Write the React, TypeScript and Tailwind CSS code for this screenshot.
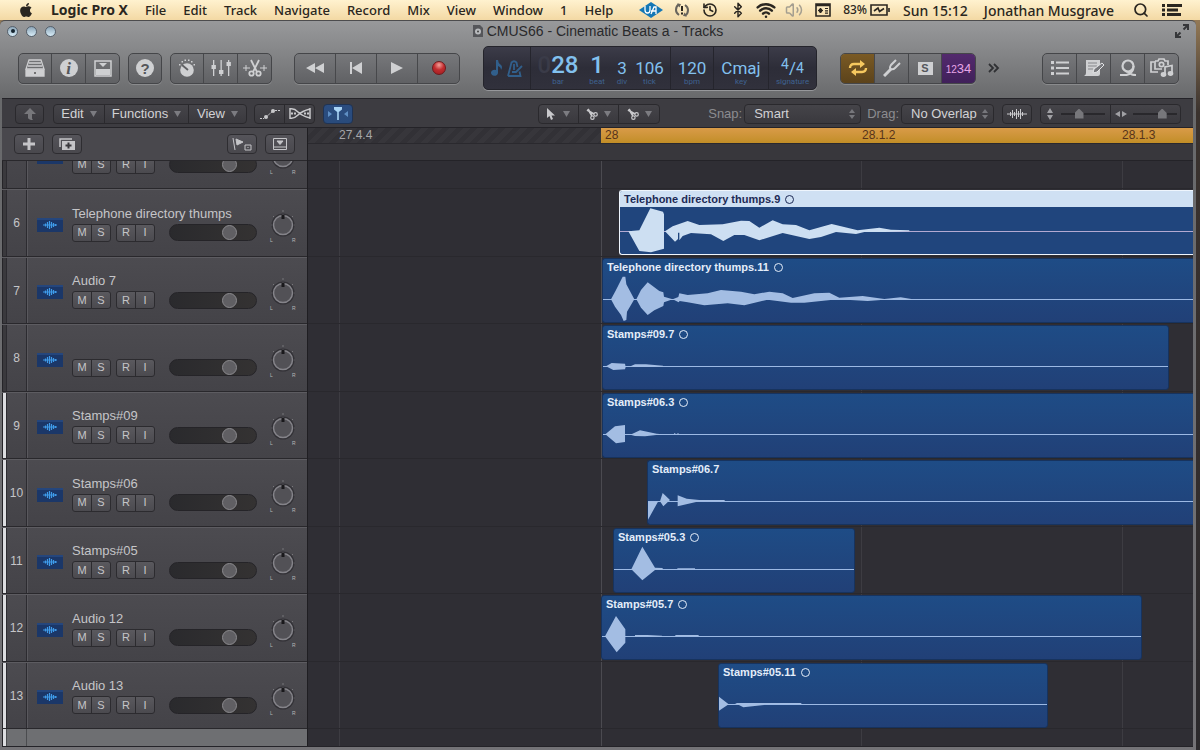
import React, { useState } from 'react';
import { Bluetooth, History, Search, Volume2, Wifi } from 'lucide-react';
import { FaApple } from 'react-icons/fa';

interface Region {
  name: string;
  start: number;
  length?: number;
  loop: boolean;
  selected?: boolean;
  wave: string;
}

interface Track {
  id: number;
  name: string;
  grouped: boolean;
  region: Region;
}

// Waveform paths use three units per pixel, with the zero line at y = 75
const TRACKS: Track[] = [
  {
    id: 6, name: 'Telephone directory thumps', grouped: false,
    region: {
      name: 'Telephone directory thumps.9', start: 311, loop: true, selected: true,
      wave: 'M25 75 L58 72 L91 6 L129 16 L132 24 V127 L93 138 L58 134Z M135 75 L158 60 L203 44 L238 56 L308 54 L363 43 L388 44 L418 64 L458 42 L488 54 L528 56 L568 72 L635 53 L713 72 L778 64 L813 70 L868 72 V75 L793 77 L733 77 L708 83 L648 77 L603 92 L568 98 L488 80 L418 102 L373 86 L343 86 L310 104 L273 84 L213 80 L188 89 L178 102 V79 L174 79 V98 L165 106Z',
    },
  },
  {
    id: 7, name: 'Audio 7', grouped: false,
    region: {
      name: 'Telephone directory thumps.11', start: 294, loop: true,
      wave: 'M24 75 L39 47 L59 7 H67 L70 30 L94 75 L72 112 L70 137 L62 140 L54 122 L36 97Z M100 75 L114 47 L134 24 L169 50 L181 54 L183 67 L209 75 L183 84 L181 95 L154 108 L134 122 L114 100Z M209 75 L226 68 L229 57 L254 62 L314 57 L354 47 L414 52 L454 60 L499 52 L539 57 L569 71 L634 57 L679 55 L709 70 L779 65 L844 74 L893 69 L925 74 V77 L844 76 L794 80 L704 75 L604 85 L564 85 L494 76 L424 93 L374 87 L304 93 L254 84 L230 80 L227 84Z',
    },
  },
  {
    id: 8, name: '', grouped: false,
    region: {
      name: 'Stamps#09.7', start: 294, length: 567, loop: true,
      wave: 'M9 75 L26 65 L66 67 L68 77 L66 84 L31 86Z M84 74 L96 69 H129 L180 73 V77 H84Z',
    },
  },
  {
    id: 9, name: 'Stamps#09', grouped: true,
    region: {
      name: 'Stamps#06.3', start: 294, loop: true,
      wave: 'M7 75 L36 51 L66 47 V98 L39 102Z M82 76 L111 63 L161 73 L180 75 L126 81 L96 80Z M213 72 H217 V75 H213Z M223 72 H227 V75 H223Z',
    },
  },
  {
    id: 10, name: 'Stamps#06', grouped: true,
    region: {
      name: 'Stamps#06.7', start: 339, loop: false,
      wave: 'M0 76 H30 L0 130Z M36 75 L44 50 L66 71 L46 90Z M89 57 L116 67 L154 71 H230 V75 H154 L89 90Z',
    },
  },
  {
    id: 11, name: 'Stamps#05', grouped: true,
    region: {
      name: 'Stamps#05.3', start: 305, length: 242, loop: true,
      wave: 'M52 75 L85 7 L123 70 L146 71 V77 L123 77 L85 108Z M190 72 H243 V75 H190Z',
    },
  },
  {
    id: 12, name: 'Audio 12', grouped: true,
    region: {
      name: 'Stamps#05.7', start: 293, length: 541, loop: true,
      wave: 'M9 75 L42 14 L70 54 V94 L44 123Z M99 71 H136 L180 73 V76 H99Z M220 71 H290 V74 H220Z',
    },
  },
  {
    id: 13, name: 'Audio 13', grouped: true,
    region: {
      name: 'Stamps#05.11', start: 410, length: 330, loop: true,
      wave: 'M0 52 L29 75 L0 94Z M48 71 H135 V77 L73 84Z M135 71 H247 V74 H135Z',
    },
  },
];

const MENUS = ['File', 'Edit', 'Track', 'Navigate', 'Record', 'Mix', 'View', 'Window', '1', 'Help'];

const toolButton =
  'flex h-full items-center justify-center border-r border-[#47484b] last:border-r-0 text-[#cfd0d2]';
const toolGroup =
  'flex h-[31px] shrink-0 overflow-hidden rounded-[5px] border border-[#454649] bg-gradient-to-b from-[#77787b] to-[#606164] shadow-[0_1px_0_#8a8b8d]';
const barGroup =
  'flex h-[20px] shrink-0 overflow-hidden rounded-[4px] border border-[#2a292d] bg-gradient-to-b from-[#454449] to-[#3a393e] text-[#c9c9cc]';

const MenuBar: React.FC = () => (
  <header className="flex h-[20px] shrink-0 items-center bg-gradient-to-b from-[#fff2cf] to-[#f3d9a4] pr-[18px] pl-[18px] font-['Noto_Sans','Open_Sans',sans-serif] text-[14px] font-medium text-[#2a2620]">
    <button aria-label="Apple" className="mr-[17px]"><FaApple className="h-4 w-4" /></button>
    <nav className="flex items-baseline gap-[17px] whitespace-nowrap text-[13px]">
      <button className="text-[14px] font-bold">Logic Pro X</button>
      {MENUS.map(menu => <button key={menu}>{menu}</button>)}
    </nav>
    <div className="ml-auto flex items-center whitespace-nowrap">
      <svg className="mr-[11px] h-4 w-6" viewBox="0 0 24 16">
        <path d="M0 8 9 2 12 0 15 2 24 8 15 14 12 16 9 14Z" fill="#1477b5" />
        <path d="M6 4v4q0 3 2.500 3T11 8V4M12 12l3-7h2v7M12 9h5" fill="none" stroke="#fff" strokeWidth="1.300" />
      </svg>
      <svg viewBox="0 0 16 16" className="mr-[12px] h-4 w-4 text-[#68645c]" fill="none" stroke="currentColor" strokeWidth="2">
        <path d="M5 2.500Q2 4 2 8q0 3 3 5M11 3q3 2 3 5 0 4-3 5.500" />
        <path d="M3 1.500 7 2 5.500 5.500zM13 14.500 9 14l1.500-3.500z" fill="currentColor" stroke="none" />
        <path d="M8 4v5M8 10.500v2" stroke="#2a2620" />
      </svg>
      <History className="mr-[12px] h-4 w-4" strokeWidth={2.4} />
      <Bluetooth className="mr-[10px] h-4 w-4" strokeWidth={2.2} />
      <Wifi className="mr-[9px] h-5 w-5" strokeWidth={3} />
      <Volume2 className="mr-[12px] h-[18px] w-[18px] text-[#a59f90]" />
      <svg className="mr-[12px] h-4 w-4" viewBox="0 0 16 16" fill="none" stroke="currentColor" strokeWidth="1.600">
        <path d="M1 2h14v12H1zM1 3.500h14" />
        <path d="M3 8.500h5M5.500 6v5M4 7l3 3M7 7l-3 3M10 6.500h3M10 8.800h3M10 11.200h3" strokeWidth="1.200" />
      </svg>
      <span className="mr-[3px] text-[12px]">83%</span>
      <svg className="mr-[12px] h-3 w-[21px]" viewBox="0 0 21 12" fill="none" stroke="currentColor" strokeWidth="1.600">
        <path d="M1 1h16v10H1zM19 4v4" />
        <path d="m4 7 4-3 1.500 3.500L14 4.500" />
      </svg>
      <span className="mr-[16px]">Sun 15:12</span>
      <span className="mr-[19px]">Jonathan Musgrave</span>
      <button aria-label="Search" className="mr-[13px]"><Search className="h-4 w-4" strokeWidth={2.6} /></button>
      <button aria-label="Notifications">
        <svg className="h-3 w-5" viewBox="0 0 20 12" fill="currentColor">
          <path d="M0 0h3v3H0zM5 0h15v3H5zM0 4.500h3v3H0zM5 4.500h11v3H5zM0 9h3v3H0zM5 9h14v3H5z" />
        </svg>
      </button>
    </div>
  </header>
);

const TitleBar: React.FC = () => (
  <div className="flex h-5 items-center px-[7px] text-[14px] text-[#29292b]">
    <div className="flex w-24 gap-2">
      {['Close', 'Minimise', 'Zoom'].map(name => (
        <button
          key={name}
          aria-label={name}
          className="flex h-[11px] w-[11px] items-center justify-center rounded-full border border-[#55606c] bg-gradient-to-b from-[#8da6b8] to-[#d8edf8]"
        >
          {name === 'Close' && <span className="h-1 w-1 rounded-full bg-[#15242f]" />}
        </button>
      ))}
    </div>
    <h1 className="flex flex-1 items-center justify-center gap-1">
      <svg className="h-3 w-[10px]" viewBox="0 0 10 12">
        <path d="M0 0h7l3 3v9H0z" fill="#55565a" />
        <circle cx="5" cy="6.500" r="3" fill="#b8babd" />
        <circle cx="5" cy="6.500" r="1" fill="#444" />
      </svg>
      CMUS66 - Cinematic Beats a - Tracks
    </h1>
    <div className="flex w-24 justify-end">
      <button aria-label="Full screen">
        <svg className="h-[14px] w-[14px]" viewBox="0 0 14 14" fill="none" stroke="#36373a" strokeWidth="2">
          <path d="M8 1h5v5M13 1 8.500 5.500M1 8v5h5M1 13l4.500-4.500" />
        </svg>
      </button>
    </div>
  </div>
);

const LcdCell: React.FC<{ label: string; large?: boolean; className: string; children: React.ReactNode }> = ({
  label, large, className, children,
}) => (
  <div className={`flex shrink-0 flex-col items-center ${className}`}>
    <div className={`flex h-[30px] items-end text-[#82c1ee] ${large ? 'text-[24px] leading-[24px] font-medium' : 'text-[17px] leading-[18px]'}`}>
      {children}
    </div>
    <div className="text-[8px] leading-[9px] text-[#3f6290]">{label}</div>
  </div>
);

const Lcd: React.FC = () => (
  <div className="flex h-[44px] shrink-0 overflow-hidden rounded-[5px] border border-[#24242b] bg-gradient-to-b from-[#3c3c49] via-[#2d2d38] to-[#31313c] font-['Roboto',sans-serif] shadow-[0_1px_0_#96979a]">
    <div className="flex w-[47px] items-center justify-center gap-1 border-r border-[#25252d] text-[#315f8b]">
      <svg className="h-5 w-3" viewBox="0 0 12 20" fill="currentColor">
        <path d="M5 2h2q0 3 3 5 2 2 0 5 0-3-3-4v7a3.500 3 0 1 1-2-3z" />
      </svg>
      <svg className="h-[17px] w-4" viewBox="0 0 16 17" fill="none" stroke="currentColor" strokeWidth="1.800">
        <path d="M1 16 4.500 2.500Q7 0 9.500 2.500L10.500 7M1 16h12.500l-1-4.500M5 12l4 0 6-6M7 4v6" />
      </svg>
    </div>
    <div className="flex w-[140px] border-r border-[#25252d] pl-[6px]">
      <LcdCell label="bar" large className="w-[42px]"><span className="text-[#3a3b48]">0</span>28</LcdCell>
      <LcdCell label="beat" large className="w-[36px]">1</LcdCell>
      <LcdCell label="div" className="w-[14px]">3</LcdCell>
      <LcdCell label="tick" className="w-[41px]">106</LcdCell>
    </div>
    <LcdCell label="bpm" className="w-[43px] border-r border-[#25252d]">120</LcdCell>
    <LcdCell label="key" className="w-[55px] border-r border-[#25252d]">Cmaj</LcdCell>
    <LcdCell label="signature" className="w-[47px]">
      <span className="text-[14px] leading-[26px]">4</span>/<span className="text-[14px] leading-[18px]">4</span>
    </LcdCell>
  </div>
);

const Toolbar: React.FC = () => (
  <div className="flex h-[54px] items-center pr-[17px] pl-[18px]">
    <div className={toolGroup}>
      <button aria-label="Library" className={`${toolButton} w-[33px]`}>
        <svg className="h-[18px] w-5" viewBox="0 0 20 18" fill="none" stroke="currentColor" strokeWidth="1.300">
          <path d="M4 1h12l3 9H1zM4 4h12M3 7h14" />
          <path d="M1 11h18v6H1z" fill="currentColor" />
          <circle cx="10" cy="14" r="1" fill="#555" stroke="none" />
        </svg>
      </button>
      <button aria-label="Inspector" className={`${toolButton} w-[34px]`}>
        <span className="flex h-[18px] w-[18px] items-center justify-center rounded-full bg-[#cfd0d2] font-['Liberation_Serif',serif] text-[17px] leading-none font-bold text-[#55565a] italic">i</span>
      </button>
      <button aria-label="Toolbar" className={`${toolButton} w-[33px]`}>
        <svg className="h-[17px] w-[18px]" viewBox="0 0 18 17">
          <path d="M1 1h16v15H1z" fill="none" stroke="currentColor" strokeWidth="1.500" />
          <path d="M5 3h8L9 7z" fill="currentColor" />
          <path d="M2 9h14v6H2z" fill="currentColor" />
        </svg>
      </button>
    </div>
    <div className={`${toolGroup} ml-[8px]`}>
      <button aria-label="Quick help" className={`${toolButton} w-[32px]`}>
        <span className="flex h-[18px] w-[18px] items-center justify-center rounded-full bg-[#cfd0d2] text-[15px] leading-none font-bold text-[#55565a]">?</span>
      </button>
    </div>
    <div className={`${toolGroup} ml-[8px]`}>
      <button aria-label="Smart controls" className={`${toolButton} w-[33px]`}>
        <svg className="h-[18px] w-[18px]" viewBox="0 0 18 18" fill="currentColor">
          <circle cx="9" cy="11" r="6.800" />
          <path d="m4 6 6 5" stroke="#606164" strokeWidth="1.800" />
          <path d="M1 5h1.500v1.500H1zM3.500 2H5v1.500H3.500zM6.500.5H8V2H6.500zM10 .5h1.500V2H10zM13 2h1.500v1.500H13zM15.500 5H17v1.500h-1.500z" />
        </svg>
      </button>
      <button aria-label="Mixer" className={`${toolButton} w-[34px]`}>
        <svg className="h-[18px] w-5" viewBox="0 0 20 18" fill="currentColor">
          <path d="M2 1h1.300v16H2zM9.500 1h1.300v16H9.500zM17 1h1.300v16H17zM.5 6h4.400v4H.5zM8 11h4.400v4H8zM15.500 3h4.400v4h-4.400z" />
        </svg>
      </button>
      <button aria-label="Editors" className={`${toolButton} w-[33px]`}>
        <svg className="h-[18px] w-6" viewBox="0 0 24 18" fill="none" stroke="currentColor" strokeWidth="1.800">
          <path d="m8 1 6 12M16 1 10 13" />
          <circle cx="8.500" cy="14.500" r="2.200" />
          <circle cx="15.500" cy="14.500" r="2.200" />
          <path d="M0 9h7M17 9h7M3 6v6M21 6v6" strokeWidth="1" />
        </svg>
      </button>
    </div>
    <div className={`${toolGroup} ml-[22px]`}>
      <button aria-label="Rewind" className={`${toolButton} w-[41px]`}>
        <svg className="h-3 w-5" viewBox="0 0 20 12" fill="currentColor"><path d="M10 1v10L1 6zM19 1v10l-9-5z" /></svg>
      </button>
      <button aria-label="Go to beginning" className={`${toolButton} w-[41px]`}>
        <svg className="h-3 w-[13px]" viewBox="0 0 13 12" fill="currentColor"><path d="M0 0h2v12H0zM12 0v12L2 6z" /></svg>
      </button>
      <button aria-label="Play" className={`${toolButton} w-[41px]`}>
        <svg className="h-[14px] w-[14px]" viewBox="0 0 14 14" fill="currentColor"><path d="M1 1v12l12-6z" /></svg>
      </button>
      <button aria-label="Record" className={`${toolButton} w-[41px]`}>
        <span className="h-[14px] w-[14px] rounded-full border border-[#6e1a1d] bg-[radial-gradient(circle_at_50%_25%,#f3a09a,#c22d2f_45%,#9c1c20)]" />
      </button>
    </div>
    <div className="ml-[23px] flex"><Lcd /></div>
    <div className={`${toolGroup} ml-[23px]`}>
      <button aria-label="Cycle" className={`${toolButton} w-[34px] bg-gradient-to-b from-[#7a5a24] to-[#5c431b] text-[#f6c85f]`}>
        <svg className="h-4 w-5" viewBox="0 0 20 16" fill="none" stroke="currentColor" strokeWidth="2.400">
          <path d="M2 8Q2 4 6 4h7M18 8q0 4-4 4H7" />
          <path d="M12 0v8l5-4zM8 8v8l-5-4z" fill="currentColor" stroke="none" />
        </svg>
      </button>
      <button aria-label="Tuner" className={`${toolButton} w-[34px]`}>
        <svg className="h-[18px] w-[18px]" viewBox="0 0 18 18" fill="none" stroke="currentColor" strokeWidth="2">
          <path d="M1 17 8 10" strokeWidth="3" />
          <path d="M13 1 8 6Q6 9 8 10t4-1l5-5" />
        </svg>
      </button>
      <button aria-label="Solo" className={`${toolButton} w-[33px]`}>
        <span className="flex h-[13px] w-[15px] items-center justify-center bg-[#cfd0d2] text-[11px] font-bold text-[#55565a]">S</span>
      </button>
      <button aria-label="Count in" className={`${toolButton} w-[33px] bg-gradient-to-b from-[#532a6d] to-[#40205a] text-[#e6a5e6]`}>
        <span className="text-[13px] leading-none"><span className="text-[10px]">12</span>34</span>
      </button>
    </div>
    <button aria-label="More" className="ml-[12px]">
      <svg className="h-[10px] w-3" viewBox="0 0 12 10" fill="none" stroke="#303134" strokeWidth="1.800"><path d="m1 1 4 4-4 4M6 1l4 4-4 4" /></svg>
    </button>
    <div className={`${toolGroup} ml-auto`}>
      <button aria-label="List editors" className={`${toolButton} w-[34px]`}>
        <svg className="h-4 w-5" viewBox="0 0 20 16" fill="currentColor">
          <path d="M1 1h3v3H1zM6 1.500h13v2H6zM1 6.500h3v3H1zM6 7h13v2H6zM1 12h3v3H1zM6 12.500h13v2H6z" />
        </svg>
      </button>
      <button aria-label="Note pads" className={`${toolButton} w-[34px]`}>
        <svg className="h-[18px] w-[22px]" viewBox="0 0 22 18">
          <path d="M3 1h14v14q0 2-2 2H1q2-1 2-3z" fill="currentColor" />
          <path d="M5 4h9M5 7h9M5 10h5" stroke="#85868a" />
          <path d="m10 14 1-4 8-6 2 2-7 7z" fill="#77787c" stroke="#e2e3e5" />
        </svg>
      </button>
      <button aria-label="Apple loops" className={`${toolButton} w-[34px]`}>
        <svg className="h-[18px] w-[18px]" viewBox="0 0 18 18" fill="none" stroke="currentColor" strokeWidth="2.200">
          <circle cx="9" cy="7" r="5.500" />
          <path d="M14.500 7q0 7-7 9H1M7 12.500q3 0 5 2.500 1 1 5 1" />
        </svg>
      </button>
      <button aria-label="Browsers" className={`${toolButton} w-[33px]`}>
        <svg className="h-5 w-6" viewBox="0 0 24 20" fill="none" stroke="currentColor" strokeWidth="1.700">
          <path d="M4 4H1v10h7M5 3h3l1-2h5l1 2h3v4M5 3v8h7" />
          <circle cx="11.500" cy="6.500" r="2.200" />
          <path d="M15 16V9l7-1.500V15" />
          <ellipse cx="13.500" cy="16.500" rx="2" ry="1.600" fill="currentColor" />
          <ellipse cx="20.500" cy="15.500" rx="2" ry="1.600" fill="currentColor" />
        </svg>
      </button>
    </div>
  </div>
);

const Caret: React.FC = () => (
  <svg className="h-[6px] w-[7px]" viewBox="0 0 7 6" fill="#7c7c81"><path d="M0 0h7L3.500 6z" /></svg>
);

const BarSelect: React.FC<{ id: string; label: string; options: string[]; className: string }> = ({
  id, label, options, className,
}) => (
  <>
    <label htmlFor={id} className="mr-[2px] text-[#8c8c90]">{label}</label>
    <div className={`${barGroup} relative ${className}`}>
      <select id={id} className="h-full w-full appearance-none bg-transparent pl-[9px] leading-none text-[#d2d2d5] outline-none">
        {options.map(option => <option key={option}>{option}</option>)}
      </select>
      <svg className="pointer-events-none absolute top-[4px] right-[5px] h-[10px] w-[6px]" viewBox="0 0 6 10" fill="#77777c">
        <path d="M0 4h6L3 0zM0 6h6l-3 4z" />
      </svg>
    </div>
  </>
);

const ScissorTool: React.FC = () => (
  <svg className="h-3 w-3" viewBox="0 0 12 12" fill="none" stroke="currentColor" strokeWidth="1.200">
    <path d="m1 2 7 4M2 1l4 7" strokeWidth="1.800" />
    <circle cx="9.600" cy="6.400" r="1.700" />
    <circle cx="6.400" cy="9.700" r="1.700" />
  </svg>
);

const zoomSlider =
  "h-[13px] w-[44px] appearance-none bg-[linear-gradient(#29282c,#29282c)] bg-[length:100%_2px] bg-center bg-no-repeat [&::-webkit-slider-thumb]:h-[10px] [&::-webkit-slider-thumb]:w-[9px] [&::-webkit-slider-thumb]:appearance-none [&::-webkit-slider-thumb]:bg-[#77777b] [&::-webkit-slider-thumb]:[clip-path:polygon(50%_0,100%_45%,100%_100%,0_100%,0_45%)]";

const ControlBar: React.FC = () => (
  <div className="flex h-[29px] items-center border-b border-[#242328] bg-[#3d3c41] pt-px pr-[12px] pl-[13px] text-[13px]">
    <div className={`${barGroup} w-[29px]`}>
      <button aria-label="Up" className="flex flex-1 items-center justify-center">
        <svg className="h-3 w-3" viewBox="0 0 12 12" fill="#77777b"><path d="M6 0 0 6h4v4q1 2 5 2-1-1-1-2V6h4z" /></svg>
      </button>
    </div>
    <div className={`${barGroup} ml-[9px]`}>
      {[
        { name: 'Edit', width: 'w-[51px]' },
        { name: 'Functions', width: 'w-[84px]' },
        { name: 'View', width: 'w-[57px]' },
      ].map(menu => (
        <button key={menu.name} className={`flex items-center justify-center gap-[6px] border-r border-[#2a292d] text-[#d2d2d5] last:border-r-0 ${menu.width}`}>
          {menu.name}<Caret />
        </button>
      ))}
    </div>
    <div className={`${barGroup} ml-[7px]`}>
      <button aria-label="Automation" className="flex w-[30px] items-center justify-center border-r border-[#2a292d]">
        <svg className="h-3 w-5" viewBox="0 0 20 12" fill="currentColor">
          <circle cx="6" cy="9" r="2" /><circle cx="13" cy="3" r="2" />
          <path d="m6 9 7-6M0 10.500h4M15 2.500h5" stroke="currentColor" strokeDasharray="2 1" />
        </svg>
      </button>
      <button aria-label="Flex" className="flex w-[29px] items-center justify-center">
        <svg className="h-[13px] w-[22px]" viewBox="0 0 22 13" fill="none" stroke="currentColor" strokeWidth="1.500">
          <path d="M1 1v11M21 1v11M1 2Q5 1 9 5t12 6M1 11q4 1 8-3t12-6" />
          <path d="M2 6.500h5M15 6.500h5" strokeWidth="2" strokeDasharray="2 1" />
        </svg>
      </button>
    </div>
    <button aria-label="Catch playhead" className="ml-[8px] flex h-[20px] w-[30px] shrink-0 items-center justify-center rounded-[4px] border border-[#1f3354] bg-gradient-to-b from-[#2b4d80] to-[#294b7c]">
      <svg className="h-[13px] w-5" viewBox="0 0 20 13">
        <path d="M0 4v6l4-3zM20 4v6l-4-3z" fill="#5f8fc4" />
        <path d="M6 0h8v2.500L10.800 5v8H9.200V5L6 2.500z" fill="#a9d4f5" />
      </svg>
    </button>
    <div className={`${barGroup} ml-auto`}>
      <button aria-label="Pointer tool" className="flex w-[40px] items-center justify-center gap-[8px] border-r border-[#2a292d]">
        <svg className="h-3 w-2" viewBox="0 0 8 12" fill="currentColor"><path d="M0 0v10l2.500-2L4 12l2-1-1.500-3.500H8z" /></svg>
        <Caret />
      </button>
      <button aria-label="Left click tool" className="flex w-[40px] items-center justify-center gap-[6px] border-r border-[#2a292d]"><ScissorTool /><Caret /></button>
      <button aria-label="Right click tool" className="flex w-[40px] items-center justify-center gap-[6px]"><ScissorTool /><Caret /></button>
    </div>
    <div className="ml-[48px] flex shrink-0 items-center">
      <BarSelect id="snap" label="Snap:" options={['Smart', 'Bar', 'Beat', 'Division']} className="mr-[6px] w-[117px]" />
      <BarSelect id="drag" label="Drag:" options={['No Overlap', 'Overlap', 'X-Fade']} className="w-[93px]" />
      <div className={`${barGroup} ml-[8px] w-[30px]`}>
        <button aria-label="Waveform zoom" className="flex flex-1 items-center justify-center">
          <svg className="h-3 w-5" viewBox="0 0 20 12" stroke="currentColor">
            <path d="M0 6h20M3.500 4v4M5.500 2v8M7.500 4v4M9.500 1v10M11.500 3v6M13.500 1v10M15.500 4v4" />
          </svg>
        </button>
      </div>
      <div className={`${barGroup} ml-[8px] items-center`}>
        <div className="flex h-full w-[70px] items-center justify-center gap-[8px] border-r border-[#2a292d]">
          <svg className="h-3 w-[6px]" viewBox="0 0 6 12" fill="#a0a0a4"><path d="M0 5h6L3 0zM0 7h6l-3 5z" /></svg>
          <input type="range" aria-label="Vertical zoom" defaultValue={40} className={zoomSlider} />
        </div>
        <div className="flex h-full w-[69px] items-center justify-center gap-[6px]">
          <svg className="h-2 w-3" viewBox="0 0 12 8" fill="#a0a0a4"><path d="M5 1v6L0 4zM7 1v6l5-3z" /></svg>
          <input type="range" aria-label="Horizontal zoom" defaultValue={72} className={zoomSlider} />
        </div>
      </div>
    </div>
  </div>
);

const smallButton =
  'flex h-[16px] w-[19px] items-center justify-center border-r border-[#2c2b2f] last:w-[18px] last:border-r-0';

const TrackHeader: React.FC<{ id: number; name: string; grouped: boolean }> = ({ id, name, grouped }) => {
  const [volume, setVolume] = useState(73);
  const label = name || `Track ${id}`;

  return (
    <div className="flex h-full w-full shrink-0 border-t border-[#5d5c61] bg-gradient-to-b from-[#4c4b50] to-[#444348] text-[#c5c5c8]">
      <div className={`w-[4px] border-l border-[#252428] ${grouped ? 'bg-[#dcdde0]' : 'bg-[#3a393d]'}`} />
      <div className="flex w-[21px] items-center justify-center border-r border-l border-[#2c2b30] text-[12px]">{id}</div>
      <div className="flex flex-1 items-center border-l border-[#59585d] pr-[10px] pl-[9px]">
        <svg className="mt-[3px] h-[14px] w-[26px] shrink-0" viewBox="0 0 26 14">
          <path d="M0 0h26v14H0z" fill="#1b3768" />
          <path d="M0 0h26v2H0z" fill="#25467c" />
          <path d="M6 7h14M8.500 5.500v3M10.500 4v6M12.500 3v8M14.500 4v6M16.500 5v4M18.500 6v2" stroke="#3f9bea" strokeWidth="1.200" />
        </svg>
        <div className="ml-[9px] min-w-0 flex-1">
          <div className="h-[18px] text-[13px] leading-[18px] whitespace-nowrap">{name}</div>
          <div className="mt-px flex items-center">
            {['MS', 'RI'].map(pair => (
              <div key={pair} className="mr-[5px] flex overflow-hidden rounded-[3px] border border-[#2c2b2f] bg-gradient-to-b from-[#5a595e] to-[#4b4a4f] text-[11px] leading-none">
                {pair.split('').map(key => <button key={key} className={smallButton}>{key}</button>)}
              </div>
            ))}
            <input
              type="range"
              aria-label={`${label} volume`}
              value={volume}
              onChange={e => setVolume(Number(e.target.value))}
              className="ml-[9px] h-[17px] w-[88px] appearance-none rounded-full border border-[#252428] bg-gradient-to-r from-[#2a2a2d] to-[#343232] [&::-webkit-slider-thumb]:h-[15px] [&::-webkit-slider-thumb]:w-[15px] [&::-webkit-slider-thumb]:appearance-none [&::-webkit-slider-thumb]:rounded-full [&::-webkit-slider-thumb]:border [&::-webkit-slider-thumb]:border-[#8b8a8e] [&::-webkit-slider-thumb]:bg-[#605f63]"
            />
          </div>
        </div>
        <svg className="h-[42px] w-[28px] shrink-0" viewBox="0 0 28 42" role="img" aria-label={`${label} pan`}>
          <path d="M14 8v2M4 14l1 1M24 14l-1 1M2 23h1M25 23h1" stroke="#77767a" />
          <circle cx="14" cy="23" r="11.500" fill="#323136" />
          <circle cx="14" cy="23" r="9.500" fill="#525156" stroke="#85848a" strokeWidth="1.500" />
          <path d="M12.500 13h3v4h-3z" fill="#19181b" />
          <text x="1" y="40" fontSize="5" fill="#b5b5b8">L</text>
          <text x="23" y="40" fontSize="5" fill="#b5b5b8">R</text>
        </svg>
      </div>
    </div>
  );
};

const RegionBlock: React.FC<{ region: Region }> = ({ region }) => {
  const { selected } = region;
  return (
    <div
      className={`relative flex h-[65px] flex-col overflow-hidden rounded-[3px] border ${region.length ? 'shrink-0' : 'flex-1 rounded-r-none border-r-0'} ${selected ? 'border-[#eef5fd] bg-[#20457d]' : 'border-[#17335e] bg-gradient-to-b from-[#1e4c86] to-[#214077]'}`}
      style={{ marginLeft: region.start, width: region.length }}
    >
      <div className={`flex h-[16px] shrink-0 items-center gap-[5px] pl-[4px] text-[11px] font-bold whitespace-nowrap ${selected ? 'bg-[#cfe0f3] text-[#1d2a55]' : 'text-[#e4edf9]'}`}>
        {region.name}
        {region.loop && <span className="h-[9px] w-[9px] rounded-full border border-current" />}
      </div>
      <div className={`relative flex-1 pt-[24px] ${selected ? 'text-[#cddff2]' : 'text-[#a3bde3]'}`}>
        <div className={`h-px w-full ${selected ? 'bg-[#b3a9d2]' : 'bg-[#9cb9e4]'}`} />
        <svg className="absolute top-0 left-0 h-[49px] w-[320px]" viewBox="0 2 960 147">
          <path d={region.wave} fill="currentColor" />
        </svg>
      </div>
    </div>
  );
};

const Ruler: React.FC = () => (
  <div className="flex h-[33px] shrink-0 flex-col border-b border-[#242328] bg-[#38373c] text-[12px] leading-[14px]">
    <div className="flex h-[16px] border-b border-[#2a292e]">
      <div className="w-[293px] shrink-0 bg-[repeating-linear-gradient(135deg,#37363b_0_5px,#323136_5px_10px)] pl-[31px] text-[#a6a6aa]">27.4.4</div>
      <div className="flex flex-1 overflow-hidden bg-gradient-to-b from-[#d99b48] to-[#c28e26] pl-[4px] text-[#57331a]">
        {['28', '28.1.2', '28.1.3'].map(mark => <span key={mark} className="w-[260px] shrink-0 first:w-[257px] last:w-auto">{mark}</span>)}
      </div>
    </div>
  </div>
);

const GridLines: React.FC = () => (
  <div className="pointer-events-none absolute inset-0 flex overflow-hidden">
    <div className="w-[32px] shrink-0 border-r border-[#3d3c42]" />
    <div className="w-[262px] shrink-0 border-r border-[#4b4a50]" />
    <div className="w-[260px] shrink-0 border-r border-[#3d3c42]" />
    <div className="w-[261px] shrink-0 border-r border-[#3d3c42]" />
  </div>
);

const headerButton =
  'flex h-[20px] w-[30px] items-center justify-center rounded-[4px] border border-[#2e2d31] bg-gradient-to-b from-[#55545a] to-[#49484d] text-[#c5c5c8]';

const App: React.FC = () => (
  <div className="flex min-h-screen flex-col bg-gradient-to-b from-[#a98a5e] via-[#3a322e] via-15% to-[#2b292c] font-['Liberation_Sans',Arial,sans-serif]">
    <MenuBar />
    <main className="mr-[4px] flex flex-1 flex-col rounded-t-[5px] border-t border-[#4c4c4e] bg-[linear-gradient(#98999b,#68696b_78px,#747377)]">
      <TitleBar />
      <Toolbar />
      <div className="mt-[3px] mr-[3px] mb-[3px] ml-[2px] flex flex-1 flex-col border-t border-b border-[#242328] bg-[#2f2e34]">
        <ControlBar />
        <div className="flex flex-1">
          <section className="flex w-[306px] shrink-0 flex-col border-r border-[#1f1e22] bg-[#6e6f72]">
            <div className="flex h-[33px] items-center border-b border-[#29282c] bg-[#49484d] px-[12px]">
              <button aria-label="Add track" className={headerButton}>
                <svg className="h-3 w-3" viewBox="0 0 12 12" fill="currentColor"><path d="M4.500 0h3v4.500H12v3H7.500V12h-3V7.500H0v-3h4.500z" /></svg>
              </button>
              <button aria-label="Duplicate track" className={`${headerButton} ml-[8px]`}>
                <svg className="h-3 w-4" viewBox="0 0 16 12">
                  <path d="M1 9V1h12" fill="none" stroke="currentColor" strokeWidth="1.500" />
                  <path d="M3 3h13v9H3z" fill="currentColor" />
                  <path d="M9.500 4.500v6M6.500 7.500h6" stroke="#3a393d" strokeWidth="2" />
                </svg>
              </button>
              <button aria-label="Global tracks" className={`${headerButton} ml-auto`}>
                <svg className="h-[13px] w-5" viewBox="0 0 20 13" fill="none" stroke="currentColor">
                  <path d="M1 0l2 12" /><path d="m4 1 7 3-6 3z" fill="currentColor" />
                  <path d="M13 7h6v5h-6zM15.500 9.500h1" />
                </svg>
              </button>
              <button aria-label="Track header options" className={`${headerButton} ml-[8px]`}>
                <svg className="h-3 w-[14px]" viewBox="0 0 14 12" fill="none" stroke="currentColor">
                  <path d="M.5.5h13v11H.5zM1 9h12" /><path d="M4 3h6L7 6.500z" fill="currentColor" />
                </svg>
              </button>
            </div>
            <div className="flex h-[28px] items-end overflow-hidden border-b border-[#29282c]">
              <div className="flex h-[67px] w-full shrink-0"><TrackHeader id={5} name="" grouped={false} /></div>
            </div>
            {TRACKS.map(track => (
              <div key={track.id} className="h-[67px] border-b border-[#29282c] odd:h-[68px]">
                <TrackHeader id={track.id} name={track.name} grouped={track.grouped} />
              </div>
            ))}
            <div className="flex min-h-[16px] flex-1">
              <div className="w-[4px] border-l border-[#252428] bg-[#dcdde0]" />
              <div className="w-[21px] border-r border-l border-[#4b4c4f]" />
            </div>
          </section>
          <section className="flex min-w-0 flex-1 flex-col">
            <Ruler />
            <div className="relative flex-1">
              <GridLines />
              <div className="relative">
                <div className="h-[28px] border-b border-[#29282d]" />
                {TRACKS.map(track => (
                  <div key={track.id} className="flex h-[68px] border-b border-[#29282d] pt-px odd:h-[67px]">
                    <RegionBlock region={track.region} />
                  </div>
                ))}
              </div>
            </div>
          </section>
        </div>
      </div>
    </main>
  </div>
);

export default App;
